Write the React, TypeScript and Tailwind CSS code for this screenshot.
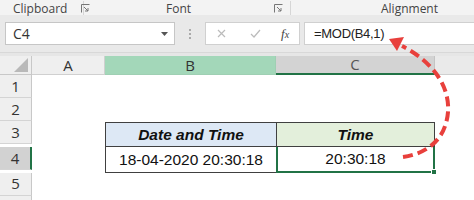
import React from 'react'

// Excel-style snippet: ribbon labels, formula bar, sheet grid with a small table

const ui = { fontFamily: '"Open Sans", "Liberation Sans", sans-serif' }
const cell = { fontFamily: '"Liberation Sans", Arial, sans-serif' }

function Launcher() {
  return (
    <svg width="9" height="9" viewBox="0 0 9 9" className="text-[#777]">
      <path d="M0.5 8.5v-8h8" fill="none" stroke="currentColor" strokeWidth="1" />
      <path d="M3 3l4 4M7 4v3H4" fill="none" stroke="currentColor" strokeWidth="1" />
    </svg>
  )
}

function RibbonLabels() {
  return (
    <div className="flex h-[15px] items-center bg-[#f3f3f3] pt-[1px] text-[12px] leading-[13px] text-[#444] shadow-[0_1px_2px_rgba(0,0,0,0.12)]" style={ui}>
      <div className="flex h-full w-[84px] items-center border-r border-[#d6d6d6]">
        <span className="ml-[13px]">Clipboard</span>
        <span className="ml-[14px]"><Launcher /></span>
      </div>
      <div className="flex h-full w-[207px] items-center border-r border-[#d6d6d6]">
        <span className="ml-[82px]">Font</span>
        <span className="ml-auto mr-[7px]"><Launcher /></span>
      </div>
      <div className="flex h-full flex-1 items-center">
        <span className="ml-[90px]">Alignment</span>
      </div>
    </div>
  )
}

function FormulaBar() {
  return (
    <div className="flex h-[37px] items-start bg-[#e9e9e9] pt-[7px]" style={ui}>
      <div className="ml-[5px] flex h-[23px] w-[170px] items-center border border-[#c6c6c6] bg-white px-[7px] text-[14px] text-[#333]">
        <span>C4</span>
        <svg width="7" height="4" viewBox="0 0 7 4" className="ml-auto mr-[-1px]">
          <path d="M0 0h7L3.5 4z" fill="#555" />
        </svg>
      </div>
      <div className="flex h-[23px] w-[30px] flex-col items-center justify-center gap-[2px]">
        <span className="h-[2px] w-[2px] bg-[#aaa]" />
        <span className="h-[2px] w-[2px] bg-[#aaa]" />
        <span className="h-[2px] w-[2px] bg-[#aaa]" />
      </div>
      <div className="flex h-[23px] w-[95px] items-center border border-[#d0d0d0] bg-white">
        <svg width="9" height="9" viewBox="0 0 9 9" className="ml-[11px]">
          <path d="M1 1l7 7M8 1l-7 7" stroke="#bbb" strokeWidth="1.2" />
        </svg>
        <svg width="11" height="9" viewBox="0 0 11 9" className="ml-[24px]">
          <path d="M1 5l3 3 6-7" fill="none" stroke="#bbb" strokeWidth="1.2" />
        </svg>
        <span className="ml-[20px] text-[13px] italic text-[#444]" style={{ fontFamily: '"Liberation Serif", serif' }}>
          f<span className="text-[10px]">x</span>
        </span>
      </div>
      <div className="ml-[4px] flex h-[23px] flex-1 items-center border border-r-0 border-[#d0d0d0] bg-white pl-[9px] text-[13px] tracking-[-0.3px] text-[#222]" style={cell}>
        =MOD(B4,1)
      </div>
    </div>
  )
}

function RowHead({ n, active }: { n: number; active?: boolean }) {
  return (
    <div
      className={
        'flex h-[23px] items-center justify-center border-b border-[#d4d4d4] text-[15px] text-[#333] ' +
        (active ? 'border-r-2 border-r-[#217346] bg-[#d2d2d2]' : 'border-r border-r-[#c8c8c8] bg-[#efefef]')
      }
      style={ui}
    >
      {n}
    </div>
  )
}

function Sheet() {
  return (
    <div className="grid grid-cols-[32px_73px_171px_159px_1fr]">
      {/* column headers */}
      <div className="relative h-[19px] border-r border-b border-[#c8c8c8] bg-[#efefef]">
        <svg width="14" height="14" viewBox="0 0 14 14" className="absolute right-[3px] bottom-[2px]">
          <path d="M14 0v14H0z" fill="#b9b9b9" />
        </svg>
      </div>
      <div className="flex h-[19px] items-center justify-center border-r border-b border-[#d0d0d0] bg-[#efefef] text-[15px] text-[#333]" style={ui}>A</div>
      <div className="flex h-[19px] items-center justify-center border-r border-b border-[#9fcfb3] bg-[#a3d7b9] text-[15px] text-[#333]" style={ui}>B</div>
      <div className="flex h-[19px] items-center justify-center border-r border-[#c4c4c4] border-b-2 border-b-[#217346] bg-[#d3d3d3] text-[15px] text-[#555]" style={ui}>C</div>
      <div className="h-[19px] border-b border-[#d0d0d0] bg-[#eaeaea]" />

      {/* rows 1-2 */}
      <RowHead n={1} />
      <div className="col-span-4 bg-white" />
      <RowHead n={2} />
      <div className="col-span-4 bg-white" />

      {/* row 3 */}
      <RowHead n={3} />
      <div className="bg-white" />
      <div className="mt-[1px] flex items-center justify-center border border-r-0 border-[#404040] bg-[#dde8f5] text-[15.5px] font-bold italic text-[#111]" style={cell}>
        Date and Time
      </div>
      <div className="mt-[1px] flex items-center justify-center border border-[#404040] bg-[#e3efdb] text-[15.5px] font-bold italic text-[#111]" style={cell}>
        Time
      </div>
      <div className="bg-white" />

      {/* row 4 */}
      <RowHead n={4} active />
      <div className="bg-white" />
      <div className="flex items-center justify-center border border-t-0 border-r-0 border-[#404040] bg-white text-[15.5px] text-[#111]" style={cell}>
        18-04-2020 20:30:18
      </div>
      <div className="relative flex items-center justify-center border-2 border-t-0 border-[#217346] bg-white text-[15.5px] text-[#111]" style={cell}>
        20:30:18
        <span className="absolute -right-[4px] -bottom-[4px] h-[6px] w-[6px] border border-white bg-[#217346]" />
      </div>
      <div className="bg-white" />

      {/* rows 5-6 */}
      <RowHead n={5} />
      <div className="col-span-4 bg-white" />
      <RowHead n={6} />
      <div className="col-span-4 bg-white" />
    </div>
  )
}

export default function App() {
  return (
    <div className="relative h-[200px] w-[474px] overflow-hidden bg-white">
      <RibbonLabels />
      <FormulaBar />
      <div className="h-[4px] border-t border-[#d8d8d8] bg-[#e6e6e6]" />
      <Sheet />

      {/* red dashed arrow pointing at the formula */}
      <svg className="pointer-events-none absolute left-0 top-0" width="474" height="200" viewBox="0 0 474 200">
        <path
          d="M403 157 C 430 153, 446 137, 448 112 C 450 84, 430 60, 402 46"
          fill="none"
          stroke="#e8403c"
          strokeWidth="4"
          strokeDasharray="10 5"
          strokeLinecap="butt"
        />
        <path d="M389 39 L404 37 L397 51 Z" fill="#e8403c" />
      </svg>
    </div>
  )
}
